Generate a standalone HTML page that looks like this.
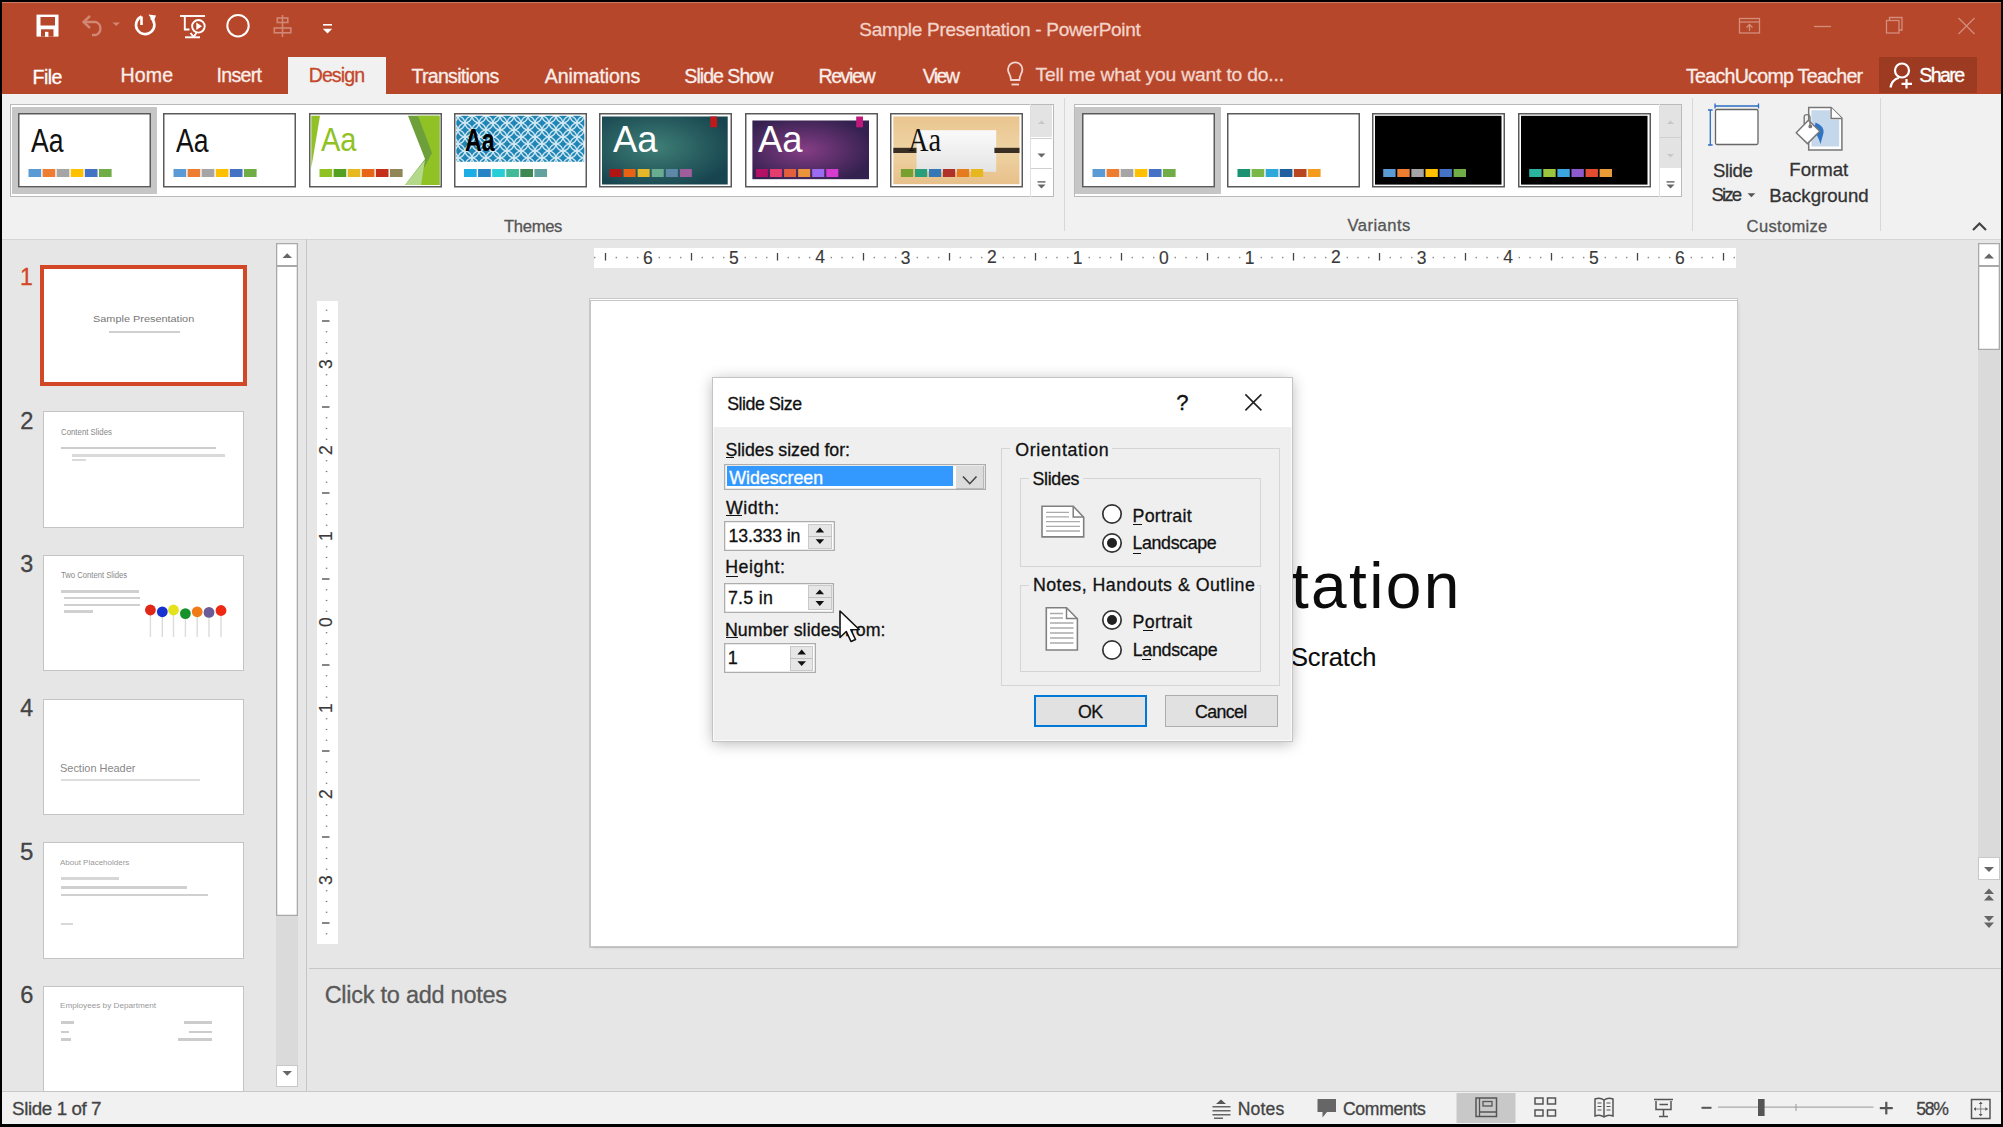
<!DOCTYPE html>
<html><head><meta charset="utf-8"><style>
html,body{margin:0;padding:0;}
body{width:2003px;height:1127px;position:relative;overflow:hidden;background:#000;font-family:'Liberation Sans',sans-serif;}
svg{display:block}
</style></head><body>
<div style="position:absolute;left:0px;top:0px;width:2003px;height:1127px;background:#000;"></div>
<div style="position:absolute;left:2px;top:2px;width:1999px;height:1121.5px;background:#e6e6e6;"></div>
<div style="position:absolute;left:2px;top:2px;width:1999px;height:92px;background:#b7472a;"></div>
<div style="position:absolute;left:2px;top:2px;width:1999px;height:1px;background:#cf7a62;"></div>
<div style="position:absolute;left:2px;top:94px;width:1999px;height:145px;background:#f1f1f1;"></div>
<div style="position:absolute;left:2px;top:239px;width:1999px;height:1px;background:#d5d5d5;"></div>
<div style="position:absolute;left:2px;top:1091px;width:1999px;height:1px;background:#c8c8c8;"></div>
<div style="position:absolute;left:2px;top:1092px;width:1999px;height:31.5px;background:#f1f1f1;"></div>
<div style="position:absolute;left:859.35px;top:20.06px;font-family:'Liberation Sans',sans-serif;font-size:19.04px;letter-spacing:-0.304px;font-weight:400;color:#f3d3c9;line-height:1;white-space:pre;-webkit-text-stroke:0.3px #f3d3c9;">Sample Presentation - PowerPoint</div>
<div style="position:absolute;left:288px;top:57px;width:98px;height:38px;background:#f1f1f1;"></div>
<div style="position:absolute;left:32.53px;top:68.10px;font-family:'Liberation Sans',sans-serif;font-size:19.60px;letter-spacing:-0.535px;font-weight:400;color:#fff;line-height:1;white-space:pre;-webkit-text-stroke:0.3px #fff;">File</div>
<div style="position:absolute;left:120.53px;top:65.60px;font-family:'Liberation Sans',sans-serif;font-size:19.60px;letter-spacing:0.140px;font-weight:400;color:#fbeeea;line-height:1;white-space:pre;-webkit-text-stroke:0.3px #fbeeea;">Home</div>
<div style="position:absolute;left:216.49px;top:65.60px;font-family:'Liberation Sans',sans-serif;font-size:19.60px;letter-spacing:-0.688px;font-weight:400;color:#fbeeea;line-height:1;white-space:pre;-webkit-text-stroke:0.3px #fbeeea;">Insert</div>
<div style="position:absolute;left:308.68px;top:66.14px;font-family:'Liberation Sans',sans-serif;font-size:19.60px;letter-spacing:-0.922px;font-weight:400;color:#c4472a;line-height:1;white-space:pre;-webkit-text-stroke:0.3px #c4472a;">Design</div>
<div style="position:absolute;left:411.46px;top:66.50px;font-family:'Liberation Sans',sans-serif;font-size:19.60px;letter-spacing:-0.728px;font-weight:400;color:#fbeeea;line-height:1;white-space:pre;-webkit-text-stroke:0.3px #fbeeea;">Transitions</div>
<div style="position:absolute;left:544.80px;top:66.50px;font-family:'Liberation Sans',sans-serif;font-size:19.60px;letter-spacing:-0.160px;font-weight:400;color:#fbeeea;line-height:1;white-space:pre;-webkit-text-stroke:0.3px #fbeeea;">Animations</div>
<div style="position:absolute;left:684.37px;top:66.50px;font-family:'Liberation Sans',sans-serif;font-size:19.60px;letter-spacing:-1.002px;font-weight:400;color:#fbeeea;line-height:1;white-space:pre;-webkit-text-stroke:0.3px #fbeeea;">Slide Show</div>
<div style="position:absolute;left:818.43px;top:66.50px;font-family:'Liberation Sans',sans-serif;font-size:19.60px;letter-spacing:-1.424px;font-weight:400;color:#fbeeea;line-height:1;white-space:pre;-webkit-text-stroke:0.3px #fbeeea;">Review</div>
<div style="position:absolute;left:922.65px;top:66.50px;font-family:'Liberation Sans',sans-serif;font-size:19.60px;letter-spacing:-1.581px;font-weight:400;color:#fbeeea;line-height:1;white-space:pre;-webkit-text-stroke:0.3px #fbeeea;">View</div>
<div style="position:absolute;left:1035.51px;top:64.74px;font-family:'Liberation Sans',sans-serif;font-size:19.26px;letter-spacing:-0.175px;font-weight:400;color:#f2d6cf;line-height:1;white-space:pre;-webkit-text-stroke:0.3px #f2d6cf;">Tell me what you want to do...</div>
<div style="position:absolute;left:1685.91px;top:66.54px;font-family:'Liberation Sans',sans-serif;font-size:19.60px;letter-spacing:-0.703px;font-weight:400;color:#fbeeea;line-height:1;white-space:pre;-webkit-text-stroke:0.3px #fbeeea;">TeachUcomp Teacher</div>
<div style="position:absolute;left:1879px;top:57px;width:98px;height:36px;background:#9c3b22;"></div>
<div style="position:absolute;left:1919.32px;top:66.10px;font-family:'Liberation Sans',sans-serif;font-size:19.60px;letter-spacing:-1.642px;font-weight:400;color:#fff;line-height:1;white-space:pre;-webkit-text-stroke:0.3px #fff;">Share</div>
<div style="position:absolute;left:503.97px;top:218.67px;font-family:'Liberation Sans',sans-serif;font-size:16.60px;letter-spacing:-0.299px;font-weight:400;color:#555;line-height:1;white-space:pre;-webkit-text-stroke:0.3px #555;">Themes</div>
<div style="position:absolute;left:1347.48px;top:218.27px;font-family:'Liberation Sans',sans-serif;font-size:16.60px;letter-spacing:0.467px;font-weight:400;color:#555;line-height:1;white-space:pre;-webkit-text-stroke:0.3px #555;">Variants</div>
<div style="position:absolute;left:1746.62px;top:218.87px;font-family:'Liberation Sans',sans-serif;font-size:16.60px;letter-spacing:0.293px;font-weight:400;color:#555;line-height:1;white-space:pre;-webkit-text-stroke:0.3px #555;">Customize</div>
<div style="position:absolute;left:1713.02px;top:161.59px;font-family:'Liberation Sans',sans-serif;font-size:18.60px;letter-spacing:-0.405px;font-weight:400;color:#333;line-height:1;white-space:pre;-webkit-text-stroke:0.3px #333;">Slide</div>
<div style="position:absolute;left:1711.42px;top:186.39px;font-family:'Liberation Sans',sans-serif;font-size:18.60px;letter-spacing:-1.803px;font-weight:400;color:#333;line-height:1;white-space:pre;-webkit-text-stroke:0.3px #333;">Size</div>
<div style="position:absolute;left:1789.36px;top:161.21px;font-family:'Liberation Sans',sans-serif;font-size:18.60px;letter-spacing:-0.018px;font-weight:400;color:#333;line-height:1;white-space:pre;-webkit-text-stroke:0.3px #333;">Format</div>
<div style="position:absolute;left:1769.31px;top:186.53px;font-family:'Liberation Sans',sans-serif;font-size:18.60px;letter-spacing:0.007px;font-weight:400;color:#333;line-height:1;white-space:pre;-webkit-text-stroke:0.3px #333;">Background</div>
<div style="position:absolute;left:1064px;top:98px;width:1px;height:133px;background:#d8d8d8;"></div>
<div style="position:absolute;left:1692px;top:98px;width:1px;height:133px;background:#d8d8d8;"></div>
<div style="position:absolute;left:1880px;top:98px;width:1px;height:133px;background:#d8d8d8;"></div>
<div style="position:absolute;left:306px;top:239px;width:1px;height:852px;background:#c6c6c6;"></div>
<div style="position:absolute;left:309px;top:968px;width:1692px;height:1px;background:#c6c6c6;"></div>
<div style="position:absolute;left:324.67px;top:984.48px;font-family:'Liberation Sans',sans-serif;font-size:23.51px;letter-spacing:-0.260px;font-weight:400;color:#595959;line-height:1;white-space:pre;-webkit-text-stroke:0.3px #595959;">Click to add notes</div>
<div style="position:absolute;left:12.11px;top:1100.30px;font-family:'Liberation Sans',sans-serif;font-size:18.78px;letter-spacing:-0.404px;font-weight:400;color:#444;line-height:1;white-space:pre;-webkit-text-stroke:0.3px #444;">Slide 1 of 7</div>
<div style="position:absolute;left:1237.64px;top:1100.52px;font-family:'Liberation Sans',sans-serif;font-size:17.60px;letter-spacing:0.150px;font-weight:400;color:#444;line-height:1;white-space:pre;-webkit-text-stroke:0.3px #444;">Notes</div>
<div style="position:absolute;left:1342.97px;top:1100.61px;font-family:'Liberation Sans',sans-serif;font-size:17.60px;letter-spacing:-0.314px;font-weight:400;color:#444;line-height:1;white-space:pre;-webkit-text-stroke:0.3px #444;">Comments</div>
<div style="position:absolute;left:1916.15px;top:1100.61px;font-family:'Liberation Sans',sans-serif;font-size:17.60px;letter-spacing:-1.284px;font-weight:400;color:#444;line-height:1;white-space:pre;-webkit-text-stroke:0.3px #444;">58%</div>
<div style="position:absolute;left:590px;top:299px;width:1147px;height:648px;background:#fff;box-shadow:0 0 0 1px #c8c8c8;"></div>
<svg style="position:absolute;left:30px;top:8px;" width="320" height="36" viewBox="0 0 320 36">
<g transform="translate(-30,-8)">
 <rect x="36.5" y="14.6" width="22" height="22" fill="#ffffff"/>
 <rect x="40.5" y="17" width="14.5" height="8.5" fill="#b7472a"/>
 <rect x="41" y="29.3" width="12.5" height="7.3" fill="#b7472a"/>
 <rect x="45" y="31.8" width="3.4" height="5" fill="#ffffff"/>
 <g opacity="0.35" fill="none" stroke="#ffffff" stroke-width="2.4">
  <path d="M84 22 H96 A7 7 0 0 1 96 35 H92"/>
  <path d="M90 16 L83.5 22 L90 28"/>
 </g>
 <path d="M112.5 22.5 L120 22.5 L116.2 26 Z" fill="#ffffff" opacity="0.35"/>
 <g fill="none" stroke="#ffffff" stroke-width="2.6">
  <path d="M151 17.8 A9.2 9.2 0 1 1 141.5 16.5"/>
  <path d="M141.5 16.5 V25"/>
 </g>
 <path d="M148.5 14.5 L156 15.5 L153.5 22 Z" fill="#ffffff"/>
 <g fill="none" stroke="#ffffff" stroke-width="1.9">
  <path d="M180 16 H205"/>
  <path d="M184.8 16 V29.5 H189.5"/>
  <circle cx="198.4" cy="26.3" r="6.3"/>
  <path d="M185 37.3 H200"/>
  <path d="M190.5 33 L193.5 36.8 M196.5 33 L193.5 36.8"/>
 </g>
 <path d="M196.3 22.6 L202 26.3 L196.3 30 Z" fill="#ffffff"/>
 <circle cx="238" cy="25.7" r="10.7" fill="none" stroke="#ffffff" stroke-width="2"/>
 <g fill="none" stroke="#ffffff" stroke-width="1.6" opacity="0.35">
  <path d="M282.5 15 V37"/>
  <rect x="277.3" y="18" width="10.5" height="4.5"/>
  <rect x="274.3" y="28" width="16.5" height="4.8"/>
 </g>
 <rect x="323" y="24" width="9" height="1.6" fill="#ffffff"/>
 <path d="M322.8 28.8 L332.2 28.8 L327.5 33.6 Z" fill="#ffffff"/>
</g></svg>
<svg style="position:absolute;left:1730px;top:10px;" width="260" height="30" viewBox="0 0 260 30">
<g transform="translate(-1730,-10)" fill="none" stroke="#ffffff" stroke-width="1.3" opacity="0.38">
 <rect x="1739.5" y="18.5" width="20" height="14.5"/>
 <path d="M1739.5 22 H1759.5"/>
 <path d="M1749.5 31 V25 M1746.5 27.5 L1749.5 24.5 L1752.5 27.5"/>
 <path d="M1814 26.5 H1831"/>
 <rect x="1886.5" y="20.5" width="12.5" height="12.5"/>
 <path d="M1889.5 20.5 V17.5 H1902 V30 H1899"/>
 <path d="M1958.5 18 L1974.5 34 M1974.5 18 L1958.5 34"/>
</g></svg>
<svg style="position:absolute;left:1885px;top:60px;" width="32" height="32" viewBox="0 0 32 32">
<g transform="translate(-1885,-60)" fill="none" stroke="#ffffff" stroke-width="2.2">
 <circle cx="1902" cy="70.5" r="7"/>
 <path d="M1890.5 87.5 A12 12 0 0 1 1899 77.8"/>
 <path d="M1906.5 79 V88.5 M1901.5 83.8 H1912"/>
</g></svg>
<svg style="position:absolute;left:1004px;top:60px;" width="24" height="30" viewBox="0 0 24 30">
<g transform="translate(-1004,-60)" fill="none" stroke="#f2d6cf" stroke-width="1.8">
 <path d="M1011 80 C1011 75 1008 73 1008 69.5 A7.2 7.2 0 0 1 1022.4 69.5 C1022.4 73 1019.4 75 1019.4 80 Z"/>
 <path d="M1011.5 84.5 H1019"/>
</g></svg>
<div style="position:absolute;left:11px;top:105.3px;width:1042px;height:91px;background:#fff;box-shadow:0 0 0 1px #bababa;"></div>
<div style="position:absolute;left:11.5px;top:106.5px;width:145px;height:87px;background:#c6c6c6;"></div>
<div style="position:absolute;left:1075px;top:105.3px;width:606px;height:91px;background:#fff;box-shadow:0 0 0 1px #bababa;"></div>
<div style="position:absolute;left:1075px;top:106.5px;width:145.5px;height:87px;background:#c6c6c6;"></div>
<svg style="position:absolute;left:16.7px;top:112.2px;" width="135" height="76.5" viewBox="0 0 135 76.5"><g transform="translate(1,1)"><rect width="133" height="74.5" fill="#fff"/><rect x="10.50" y="56" width="12.7" height="8" fill="#5b9bd5"/><rect x="24.58" y="56" width="12.7" height="8" fill="#ed7d31"/><rect x="38.66" y="56" width="12.7" height="8" fill="#a5a5a5"/><rect x="52.74" y="56" width="12.7" height="8" fill="#ffc000"/><rect x="66.82" y="56" width="12.7" height="8" fill="#4472c4"/><rect x="80.90" y="56" width="12.7" height="8" fill="#70ad47"/><rect x="0.75" y="0.75" width="131.5" height="73.0" fill="none" stroke="#5a5a5a" stroke-width="1.5"/></g></svg>
<svg style="position:absolute;left:162px;top:112.2px;" width="135" height="76.5" viewBox="0 0 135 76.5"><g transform="translate(1,1)"><rect width="133" height="74.5" fill="#fff"/><rect x="10.50" y="56" width="12.7" height="8" fill="#5b9bd5"/><rect x="24.58" y="56" width="12.7" height="8" fill="#ed7d31"/><rect x="38.66" y="56" width="12.7" height="8" fill="#a5a5a5"/><rect x="52.74" y="56" width="12.7" height="8" fill="#ffc000"/><rect x="66.82" y="56" width="12.7" height="8" fill="#4472c4"/><rect x="80.90" y="56" width="12.7" height="8" fill="#70ad47"/><rect x="0.75" y="0.75" width="131.5" height="73.0" fill="none" stroke="#5a5a5a" stroke-width="1.5"/></g></svg>
<div style="position:absolute;left:30.85px;top:124.32px;font-family:'Liberation Sans',sans-serif;font-size:33.29px;letter-spacing:0.000px;font-weight:400;color:#111;line-height:1;white-space:pre;z-index:2;transform:scaleX(0.7983);transform-origin:0 0;">Aa</div>
<div style="position:absolute;left:175.65px;top:124.32px;font-family:'Liberation Sans',sans-serif;font-size:33.29px;letter-spacing:0.000px;font-weight:400;color:#111;line-height:1;white-space:pre;z-index:2;transform:scaleX(0.7983);transform-origin:0 0;">Aa</div>
<svg style="position:absolute;left:307.7px;top:112.2px;" width="135" height="76.5" viewBox="0 0 135 76.5"><g transform="translate(1,1)"><rect width="133" height="74.5" fill="#fff"/>
<path d="M2.3 2.8 H11 L2.3 55 Z" fill="#90c226"/>
<path d="M99 2.8 H130.5 V72 H96 L116 46 Z" fill="#6d9f3a"/>
<path d="M109 2.8 H130.5 V72 H106 L123 40 Z" fill="#90c226"/>
<path d="M96 72 L116 47 L112 72 Z" fill="#b5d98a"/>
<rect x="10.50" y="56" width="12.7" height="8" fill="#90c226"/><rect x="24.58" y="56" width="12.7" height="8" fill="#54a021"/><rect x="38.66" y="56" width="12.7" height="8" fill="#e6b91e"/><rect x="52.74" y="56" width="12.7" height="8" fill="#e76618"/><rect x="66.82" y="56" width="12.7" height="8" fill="#c42f1a"/><rect x="80.90" y="56" width="12.7" height="8" fill="#918655"/><rect x="0.75" y="0.75" width="131.5" height="73.0" fill="none" stroke="#5a5a5a" stroke-width="1.5"/></g></svg>
<div style="position:absolute;left:320.85px;top:122.09px;font-family:'Liberation Sans',sans-serif;font-size:34.14px;letter-spacing:0.000px;font-weight:400;color:#90c226;line-height:1;white-space:pre;z-index:2;transform:scaleX(0.8503);transform-origin:0 0;">Aa</div>
<svg style="position:absolute;left:453.3px;top:112.2px;" width="135" height="76.5" viewBox="0 0 135 76.5"><g transform="translate(1,1)"><defs><pattern id="pt" width="14" height="14" patternUnits="userSpaceOnUse" x="4" y="3">
<rect width="14" height="14" fill="#1d86b6"/>
<circle cx="0" cy="7" r="6.8" fill="none" stroke="#cfe6f1" stroke-width="1.3"/>
<circle cx="14" cy="7" r="6.8" fill="none" stroke="#cfe6f1" stroke-width="1.3"/>
<circle cx="7" cy="0" r="6.8" fill="none" stroke="#cfe6f1" stroke-width="1.3"/>
<circle cx="7" cy="14" r="6.8" fill="none" stroke="#cfe6f1" stroke-width="1.3"/>
</pattern></defs>
<rect width="133" height="74.5" fill="#fff"/>
<rect x="2.3" y="2.8" width="128" height="46" fill="url(#pt)"/>
<rect x="10.00" y="56" width="12.7" height="8" fill="#1cade4"/><rect x="24.08" y="56" width="12.7" height="8" fill="#2683c6"/><rect x="38.16" y="56" width="12.7" height="8" fill="#27ced7"/><rect x="52.24" y="56" width="12.7" height="8" fill="#42ba97"/><rect x="66.32" y="56" width="12.7" height="8" fill="#3e8853"/><rect x="80.40" y="56" width="12.7" height="8" fill="#62a39f"/><rect x="0.75" y="0.75" width="131.5" height="73.0" fill="none" stroke="#5a5a5a" stroke-width="1.5"/></g></svg>
<div style="position:absolute;left:464.71px;top:125.07px;font-family:'Liberation Sans',sans-serif;font-size:31.55px;letter-spacing:0.000px;font-weight:700;color:#000;line-height:1;white-space:pre;z-index:2;transform:scaleX(0.7349);transform-origin:0 0;">Aa</div>
<svg style="position:absolute;left:598.3px;top:112.2px;" width="135" height="76.5" viewBox="0 0 135 76.5"><g transform="translate(1,1)"><defs><radialGradient id="ion" cx="0.42" cy="0.45" r="0.65"><stop offset="0" stop-color="#3f7f76"/><stop offset="1" stop-color="#17444f"/></radialGradient></defs>
<rect width="133" height="74.5" fill="#fff"/>
<rect x="3" y="3.5" width="125.7" height="68" fill="url(#ion)"/>
<rect x="111.3" y="3.5" width="6.7" height="10.8" fill="#c0191b"/>
<rect x="10.50" y="56" width="12" height="8" fill="#b01513"/><rect x="24.58" y="56" width="12" height="8" fill="#ea6312"/><rect x="38.66" y="56" width="12" height="8" fill="#e6b729"/><rect x="52.74" y="56" width="12" height="8" fill="#6aac90"/><rect x="66.82" y="56" width="12" height="8" fill="#5f87a8"/><rect x="80.90" y="56" width="12" height="8" fill="#9e5e9b"/><rect x="0.75" y="0.75" width="131.5" height="73.0" fill="none" stroke="#5a5a5a" stroke-width="1.5"/></g></svg>
<div style="position:absolute;left:613.10px;top:122.49px;font-family:'Liberation Sans',sans-serif;font-size:36.29px;letter-spacing:0.000px;font-weight:400;color:#fff;line-height:1;white-space:pre;z-index:2;transform:scaleX(1.0032);transform-origin:0 0;">Aa</div>
<svg style="position:absolute;left:743.6px;top:112.2px;" width="135" height="76.5" viewBox="0 0 135 76.5"><g transform="translate(1,1)"><defs><radialGradient id="ionb" cx="0.45" cy="0.5" r="0.6"><stop offset="0" stop-color="#853d85"/><stop offset="1" stop-color="#33214f"/></radialGradient></defs>
<rect width="133" height="74.5" fill="#fff"/>
<rect x="7.4" y="7.5" width="116.6" height="58.7" fill="url(#ionb)"/>
<rect x="111.2" y="3.5" width="6.8" height="10.8" fill="#c0187a"/>
<rect x="10.90" y="56" width="12" height="8" fill="#b31166"/><rect x="24.98" y="56" width="12" height="8" fill="#e33d6f"/><rect x="39.06" y="56" width="12" height="8" fill="#e45f3c"/><rect x="53.14" y="56" width="12" height="8" fill="#e9943a"/><rect x="67.22" y="56" width="12" height="8" fill="#9b6bf2"/><rect x="81.30" y="56" width="12" height="8" fill="#d53dd0"/><rect x="0.75" y="0.75" width="131.5" height="73.0" fill="none" stroke="#5a5a5a" stroke-width="1.5"/></g></svg>
<div style="position:absolute;left:757.65px;top:122.49px;font-family:'Liberation Sans',sans-serif;font-size:36.29px;letter-spacing:0.000px;font-weight:400;color:#fff;line-height:1;white-space:pre;z-index:2;transform:scaleX(1.0033);transform-origin:0 0;">Aa</div>
<svg style="position:absolute;left:888.5px;top:112.2px;" width="135" height="76.5" viewBox="0 0 135 76.5"><g transform="translate(1,1)"><defs><linearGradient id="wd" x1="0" y1="0" x2="0" y2="1"><stop offset="0" stop-color="#e9c58f"/><stop offset="0.5" stop-color="#efd3a4"/><stop offset="1" stop-color="#e7c08a"/></linearGradient>
<linearGradient id="pp" x1="0" y1="0" x2="0" y2="1"><stop offset="0" stop-color="#fafafa"/><stop offset="1" stop-color="#e4e4e4"/></linearGradient></defs>
<rect width="133" height="74.5" fill="#fff"/>
<rect x="3.3" y="3.4" width="126.2" height="67.8" fill="url(#wd)"/>
<rect x="26.5" y="17.2" width="79.7" height="41.6" fill="url(#pp)"/>
<rect x="3.3" y="34.8" width="23.2" height="5.2" fill="#3a2e22"/>
<rect x="104.4" y="34.8" width="25.1" height="5.2" fill="#3a2e22"/>
<rect x="10.90" y="56" width="12.3" height="8" fill="#77a02e"/><rect x="24.90" y="56" width="12.3" height="8" fill="#2a9e7a"/><rect x="38.90" y="56" width="12.3" height="8" fill="#3677b5"/><rect x="52.90" y="56" width="12.3" height="8" fill="#b0302a"/><rect x="66.90" y="56" width="12.3" height="8" fill="#e67a1e"/><rect x="80.90" y="56" width="12.3" height="8" fill="#e6b71e"/><rect x="0.75" y="0.75" width="131.5" height="73.0" fill="none" stroke="#5a5a5a" stroke-width="1.5"/></g></svg>
<div style="position:absolute;left:907.81px;top:121.99px;font-family:'Liberation Serif',sans-serif;font-size:34.48px;letter-spacing:0.000px;font-weight:400;color:#111;line-height:1;white-space:pre;z-index:2;transform:scaleX(0.8246);transform-origin:0 0;">Aa</div>
<div style="position:absolute;left:1031px;top:104.5px;width:21px;height:32px;background:#e3e3e3;"></div>
<div style="position:absolute;left:1031px;top:137.5px;width:21px;height:1px;background:#d0d0d0;"></div>
<div style="position:absolute;left:1031px;top:167.5px;width:21px;height:1px;background:#d0d0d0;"></div>
<div style="position:absolute;left:1030px;top:104px;width:1px;height:93px;background:#e0e0e0;"></div>
<svg style="position:absolute;left:1031px;top:104px;" width="21" height="93" viewBox="0 0 21 93">
<path d="M7 20 L14 20 L10.5 16.5 Z" fill="#c8c8c8"/>
<path d="M6.5 49.5 L14.5 49.5 L10.5 53.5 Z" fill="#666"/>
<rect x="6.5" y="77.2" width="8" height="1.4" fill="#666"/>
<path d="M6.5 80.5 L14.5 80.5 L10.5 84.5 Z" fill="#666"/>
</svg>
<svg style="position:absolute;left:1081px;top:112.2px;" width="135" height="76.5" viewBox="0 0 135 76.5"><g transform="translate(1,1)"><rect width="133" height="74.5" fill="#fff"/><rect x="10.50" y="56" width="12.7" height="8" fill="#5b9bd5"/><rect x="24.58" y="56" width="12.7" height="8" fill="#ed7d31"/><rect x="38.66" y="56" width="12.7" height="8" fill="#a5a5a5"/><rect x="52.74" y="56" width="12.7" height="8" fill="#ffc000"/><rect x="66.82" y="56" width="12.7" height="8" fill="#4472c4"/><rect x="80.90" y="56" width="12.7" height="8" fill="#70ad47"/><rect x="0.75" y="0.75" width="131.5" height="73.0" fill="none" stroke="#5a5a5a" stroke-width="1.5"/></g></svg>
<svg style="position:absolute;left:1226.3px;top:112.2px;" width="135" height="76.5" viewBox="0 0 135 76.5"><g transform="translate(1,1)"><rect width="133" height="74.5" fill="#fff"/><rect x="10.50" y="56" width="12.7" height="8" fill="#1a9271"/><rect x="24.58" y="56" width="12.7" height="8" fill="#7ab648"/><rect x="38.66" y="56" width="12.7" height="8" fill="#2ea8d8"/><rect x="52.74" y="56" width="12.7" height="8" fill="#1f5f9f"/><rect x="66.82" y="56" width="12.7" height="8" fill="#b8461e"/><rect x="80.90" y="56" width="12.7" height="8" fill="#f39c1d"/><rect x="0.75" y="0.75" width="131.5" height="73.0" fill="none" stroke="#5a5a5a" stroke-width="1.5"/></g></svg>
<svg style="position:absolute;left:1371.4px;top:112.2px;" width="135" height="76.5" viewBox="0 0 135 76.5"><g transform="translate(1,1)"><rect width="133" height="74.5" fill="#fff"/><rect x="3" y="2.8" width="126.5" height="68.8" fill="#000"/><rect x="11.20" y="56" width="12.4" height="8" fill="#5b9bd5"/><rect x="25.28" y="56" width="12.4" height="8" fill="#ed7d31"/><rect x="39.36" y="56" width="12.4" height="8" fill="#a5a5a5"/><rect x="53.44" y="56" width="12.4" height="8" fill="#ffc000"/><rect x="67.52" y="56" width="12.4" height="8" fill="#4472c4"/><rect x="81.60" y="56" width="12.4" height="8" fill="#70ad47"/><rect x="0.75" y="0.75" width="131.5" height="73.0" fill="none" stroke="#5a5a5a" stroke-width="1.5"/></g></svg>
<svg style="position:absolute;left:1517.2px;top:112.2px;" width="135" height="76.5" viewBox="0 0 135 76.5"><g transform="translate(1,1)"><rect width="133" height="74.5" fill="#fff"/><rect x="3" y="2.8" width="126.5" height="68.8" fill="#000"/><rect x="11.20" y="56" width="12.4" height="8" fill="#2bb5a0"/><rect x="25.28" y="56" width="12.4" height="8" fill="#9bc53d"/><rect x="39.36" y="56" width="12.4" height="8" fill="#3aa6dd"/><rect x="53.44" y="56" width="12.4" height="8" fill="#8e5ad0"/><rect x="67.52" y="56" width="12.4" height="8" fill="#e24c32"/><rect x="81.60" y="56" width="12.4" height="8" fill="#e89b36"/><rect x="0.75" y="0.75" width="131.5" height="73.0" fill="none" stroke="#5a5a5a" stroke-width="1.5"/></g></svg>
<div style="position:absolute;left:1659.5px;top:104.5px;width:21px;height:32px;background:#e3e3e3;"></div>
<div style="position:absolute;left:1659.5px;top:137.5px;width:21px;height:30px;background:#e3e3e3;"></div>
<div style="position:absolute;left:1659.5px;top:137px;width:21px;height:1px;background:#d0d0d0;"></div>
<div style="position:absolute;left:1658.5px;top:104px;width:1px;height:93px;background:#e0e0e0;"></div>
<svg style="position:absolute;left:1659.5px;top:104px;" width="21" height="93" viewBox="0 0 21 93">
<path d="M7 20 L14 20 L10.5 16.5 Z" fill="#c8c8c8"/>
<path d="M7 50 L14 50 L10.5 53.5 Z" fill="#c8c8c8"/>
<rect x="6.5" y="77.2" width="8" height="1.4" fill="#666"/>
<path d="M6.5 80.5 L14.5 80.5 L10.5 84.5 Z" fill="#666"/>
</svg>
<svg style="position:absolute;left:1705px;top:100px;" width="175" height="55" viewBox="0 0 175 55">
<g transform="translate(-1705,-100)">
 <rect x="1715.5" y="109.5" width="42.5" height="35" rx="1.5" fill="#fff" stroke="#666" stroke-width="1.3"/>
 <path d="M1715 106 H1758.5 M1715 103.5 V108.5 M1758.5 103.5 V108.5" stroke="#2b6cc4" stroke-width="1.3" fill="none"/>
 <path d="M1710.3 110 V145 M1708 110 H1712.6 M1708 145 H1712.6" stroke="#2b6cc4" stroke-width="1.3" fill="none"/>
 <path d="M1808.7 107.6 H1831.1 L1841.9 118 V150 H1808.7 Z" fill="#fff" stroke="#777" stroke-width="1.5"/>
 <path d="M1811.4 110.3 H1830 V119.5 H1839.2 V146.6 H1811.4 Z" fill="#c5d7ea"/>
 <path d="M1831.1 107.6 V118.5 H1841.9" fill="#fff" stroke="#777" stroke-width="1.5"/>
 <path d="M1815.5 122.5 Q1824.5 126 1823.5 133 L1820.5 144 Q1818 136 1814 131 Z" fill="#2e75c6"/>
 <path d="M1796.2 132.7 L1808.4 120.2 L1819.8 131.2 L1807.5 143.6 Z" fill="#fff" stroke="#777" stroke-width="1.5" stroke-linejoin="round"/>
 <path d="M1804.2 124 V116.5 Q1804.5 114.6 1807 114.6 Q1809.6 114.6 1810 117 V126" fill="none" stroke="#777" stroke-width="1.4"/>
 <circle cx="1810.3" cy="126.4" r="1.9" fill="#777"/>
</g></svg>
<svg style="position:absolute;left:1745px;top:190px;" width="14" height="10" viewBox="0 0 14 10"><path d="M2.5 3.2 H10.3 L6.4 7.2 Z" fill="#555"/></svg>
<svg style="position:absolute;left:1968px;top:218px;" width="24" height="16" viewBox="0 0 24 16"><path d="M5 12 L11.5 5.5 L18 12" fill="none" stroke="#444" stroke-width="2.2"/></svg>
<div style="position:absolute;left:39.7px;top:264.7px;width:207.7px;height:121.6px;background:#d24726;"></div>
<div style="position:absolute;left:44.3px;top:269.3px;width:198.6px;height:112.4px;background:#fff;"></div>
<div style="position:absolute;left:19.90px;top:265.86px;font-family:'Liberation Sans',sans-serif;font-size:23.04px;letter-spacing:-2.409px;font-weight:400;color:#d24726;line-height:1;white-space:pre;-webkit-text-stroke:0.3px #d24726;">1</div>
<div style="position:absolute;left:93.26px;top:316.27px;font-family:'Liberation Sans',sans-serif;font-size:8.19px;letter-spacing:0.000px;font-weight:400;color:#777;line-height:1;white-space:pre;transform:scaleX(1.3340);transform-origin:0 0;">Sample Presentation</div>
<div style="position:absolute;left:108.6px;top:330.5px;width:71.8px;height:2.5px;background:#cfcfcf;"></div>
<div style="position:absolute;left:43.6px;top:411.5px;width:199.6px;height:115.0px;background:#fff;box-shadow:0 0 0 1px #c4c4c4;"></div>
<div style="position:absolute;left:20.26px;top:410.04px;font-family:'Liberation Sans',sans-serif;font-size:23.71px;letter-spacing:-0.209px;font-weight:400;color:#444;line-height:1;white-space:pre;-webkit-text-stroke:0.3px #444;">2</div>
<div style="position:absolute;left:60.71px;top:428.26px;font-family:'Liberation Sans',sans-serif;font-size:8.65px;letter-spacing:0.000px;font-weight:400;color:#888;line-height:1;white-space:pre;transform:scaleX(0.9078);transform-origin:0 0;">Content Slides</div>
<div style="position:absolute;left:61px;top:446.5px;width:155px;height:2.8px;background:#cdcdcd;"></div>
<div style="position:absolute;left:72.4px;top:454.2px;width:152.9px;height:2.4px;background:#dadada;"></div>
<div style="position:absolute;left:72.4px;top:459.3px;width:13.6px;height:2.2px;background:#dadada;"></div>
<div style="position:absolute;left:43.6px;top:555.8px;width:199.6px;height:114.0px;background:#fff;box-shadow:0 0 0 1px #c4c4c4;"></div>
<div style="position:absolute;left:20.37px;top:553.29px;font-family:'Liberation Sans',sans-serif;font-size:23.38px;letter-spacing:-0.989px;font-weight:400;color:#444;line-height:1;white-space:pre;-webkit-text-stroke:0.3px #444;">3</div>
<div style="position:absolute;left:60.65px;top:571.33px;font-family:'Liberation Sans',sans-serif;font-size:8.51px;letter-spacing:0.000px;font-weight:400;color:#888;line-height:1;white-space:pre;transform:scaleX(0.9030);transform-origin:0 0;">Two Content Slides</div>
<div style="position:absolute;left:61px;top:590px;width:78px;height:2.5px;background:#d0d0d0;"></div>
<div style="position:absolute;left:64px;top:596.5px;width:75.8px;height:2.5px;background:#d0d0d0;"></div>
<div style="position:absolute;left:64px;top:603.5px;width:75.8px;height:2.5px;background:#d0d0d0;"></div>
<div style="position:absolute;left:64px;top:610.2px;width:29px;height:2.5px;background:#d0d0d0;"></div>
<svg style="position:absolute;left:140px;top:600px;" width="90" height="45" viewBox="0 0 90 45"><rect x="9.7" y="15.0" width="1.4" height="22.0" fill="#dcdcdc"/><rect x="21.6" y="16.8" width="1.4" height="20.2" fill="#dcdcdc"/><rect x="32.8" y="15.0" width="1.4" height="22.0" fill="#dcdcdc"/><rect x="44.7" y="18.6" width="1.4" height="18.4" fill="#dcdcdc"/><rect x="56.5" y="16.8" width="1.4" height="20.2" fill="#dcdcdc"/><rect x="68.3" y="17.4" width="1.4" height="19.6" fill="#dcdcdc"/><rect x="80.3" y="15.5" width="1.4" height="21.5" fill="#dcdcdc"/><circle cx="10.4" cy="10.0" r="5.4" fill="#e0281a"/><circle cx="22.3" cy="11.8" r="5.4" fill="#1832d0"/><circle cx="33.5" cy="10.0" r="5.4" fill="#e4e21c"/><circle cx="45.4" cy="13.6" r="5.4" fill="#15922a"/><circle cx="57.2" cy="11.8" r="5.4" fill="#f07a18"/><circle cx="69.0" cy="12.4" r="5.4" fill="#6a5a98"/><circle cx="81.0" cy="10.5" r="5.4" fill="#ef2a14"/></svg>
<div style="position:absolute;left:43.6px;top:699.5px;width:199.6px;height:114.70000000000005px;background:#fff;box-shadow:0 0 0 1px #c4c4c4;"></div>
<div style="position:absolute;left:20.34px;top:697.13px;font-family:'Liberation Sans',sans-serif;font-size:23.14px;letter-spacing:-0.503px;font-weight:400;color:#444;line-height:1;white-space:pre;-webkit-text-stroke:0.3px #444;">4</div>
<div style="position:absolute;left:60.21px;top:764.43px;font-family:'Liberation Sans',sans-serif;font-size:10.14px;letter-spacing:0.000px;font-weight:400;color:#888;line-height:1;white-space:pre;transform:scaleX(1.0808);transform-origin:0 0;">Section Header</div>
<div style="position:absolute;left:60.5px;top:778.8px;width:139.2px;height:2.4px;background:#dedede;"></div>
<div style="position:absolute;left:43.6px;top:843.1px;width:199.6px;height:114.89999999999998px;background:#fff;box-shadow:0 0 0 1px #c4c4c4;"></div>
<div style="position:absolute;left:20.04px;top:840.19px;font-family:'Liberation Sans',sans-serif;font-size:24.14px;letter-spacing:-1.589px;font-weight:400;color:#444;line-height:1;white-space:pre;-webkit-text-stroke:0.3px #444;">5</div>
<div style="position:absolute;left:60.15px;top:858.53px;font-family:'Liberation Sans',sans-serif;font-size:7.70px;letter-spacing:0.000px;font-weight:400;color:#999;line-height:1;white-space:pre;transform:scaleX(1.0399);transform-origin:0 0;">About Placeholders</div>
<div style="position:absolute;left:60.5px;top:877.3px;width:58px;height:2.6px;background:#d6d6d6;"></div>
<div style="position:absolute;left:60.5px;top:886.3px;width:126px;height:2.6px;background:#d0d0d0;"></div>
<div style="position:absolute;left:60.5px;top:893.8px;width:147.3px;height:2.6px;background:#d0d0d0;"></div>
<div style="position:absolute;left:60.5px;top:923px;width:12.5px;height:2.2px;background:#d8d8d8;"></div>
<div style="position:absolute;left:43.6px;top:986.9px;width:199.6px;height:104.10000000000002px;background:#fff;box-shadow:0 0 0 1px #c4c4c4;"></div>
<div style="position:absolute;left:20.27px;top:983.75px;font-family:'Liberation Sans',sans-serif;font-size:23.66px;letter-spacing:0.315px;font-weight:400;color:#444;line-height:1;white-space:pre;-webkit-text-stroke:0.3px #444;">6</div>
<div style="position:absolute;left:59.90px;top:1003.48px;font-family:'Liberation Sans',sans-serif;font-size:6.81px;letter-spacing:0.000px;font-weight:400;color:#999;line-height:1;white-space:pre;transform:scaleX(1.2002);transform-origin:0 0;">Employees by Department</div>
<div style="position:absolute;left:60.5px;top:1021px;width:13.099999999999994px;height:2.6px;background:#cccccc;"></div>
<div style="position:absolute;left:184px;top:1021px;width:28.19999999999999px;height:2.6px;background:#cccccc;"></div>
<div style="position:absolute;left:60.5px;top:1030.5px;width:8.099999999999994px;height:2.6px;background:#cccccc;"></div>
<div style="position:absolute;left:189px;top:1030.5px;width:23.19999999999999px;height:2.6px;background:#cccccc;"></div>
<div style="position:absolute;left:60.5px;top:1038px;width:10.700000000000003px;height:2.6px;background:#cccccc;"></div>
<div style="position:absolute;left:178px;top:1038px;width:34.19999999999999px;height:2.6px;background:#cccccc;"></div>
<div style="position:absolute;left:276px;top:243px;width:22.4px;height:844px;background:#dadada;"></div>
<div style="position:absolute;left:276px;top:243px;width:22.4px;height:673px;background:#fff;box-shadow:inset 0 0 0 1.3px #a9a9a9;"></div>
<div style="position:absolute;left:276px;top:265px;width:22.4px;height:1.5px;background:#a9a9a9;"></div>
<div style="position:absolute;left:276px;top:1064.5px;width:22.4px;height:22.5px;background:#fff;box-shadow:inset 0 0 0 1px #c8c8c8;"></div>
<svg style="position:absolute;left:276px;top:243px;" width="23" height="844" viewBox="0 0 23 844">
<path d="M6.5 15 L16 15 L11.2 10.3 Z" fill="#666"/>
<path d="M6.5 828 L16 828 L11.2 832.8 Z" fill="#666"/>
</svg>
<div style="position:absolute;left:593.5px;top:248px;width:1142.2px;height:19.5px;background:#fff;"></div>
<svg style="position:absolute;left:593.5px;top:248px;" width="1143" height="20" viewBox="0 0 1143 20"><rect x="0.15" y="8.8" width="1.2" height="1.5" fill="#777"/><rect x="10.85" y="5" width="1.3" height="7.5" fill="#444"/><rect x="21.65" y="8.8" width="1.2" height="1.5" fill="#777"/><rect x="32.40" y="8.8" width="1.2" height="1.5" fill="#777"/><rect x="43.15" y="8.8" width="1.2" height="1.5" fill="#777"/><rect x="64.65" y="8.8" width="1.2" height="1.5" fill="#777"/><rect x="75.40" y="8.8" width="1.2" height="1.5" fill="#777"/><rect x="86.15" y="8.8" width="1.2" height="1.5" fill="#777"/><rect x="96.85" y="5" width="1.3" height="7.5" fill="#444"/><rect x="107.65" y="8.8" width="1.2" height="1.5" fill="#777"/><rect x="118.40" y="8.8" width="1.2" height="1.5" fill="#777"/><rect x="129.15" y="8.8" width="1.2" height="1.5" fill="#777"/><rect x="150.65" y="8.8" width="1.2" height="1.5" fill="#777"/><rect x="161.40" y="8.8" width="1.2" height="1.5" fill="#777"/><rect x="172.15" y="8.8" width="1.2" height="1.5" fill="#777"/><rect x="182.85" y="5" width="1.3" height="7.5" fill="#444"/><rect x="193.65" y="8.8" width="1.2" height="1.5" fill="#777"/><rect x="204.40" y="8.8" width="1.2" height="1.5" fill="#777"/><rect x="215.15" y="8.8" width="1.2" height="1.5" fill="#777"/><rect x="236.65" y="8.8" width="1.2" height="1.5" fill="#777"/><rect x="247.40" y="8.8" width="1.2" height="1.5" fill="#777"/><rect x="258.15" y="8.8" width="1.2" height="1.5" fill="#777"/><rect x="268.85" y="5" width="1.3" height="7.5" fill="#444"/><rect x="279.65" y="8.8" width="1.2" height="1.5" fill="#777"/><rect x="290.40" y="8.8" width="1.2" height="1.5" fill="#777"/><rect x="301.15" y="8.8" width="1.2" height="1.5" fill="#777"/><rect x="322.65" y="8.8" width="1.2" height="1.5" fill="#777"/><rect x="333.40" y="8.8" width="1.2" height="1.5" fill="#777"/><rect x="344.15" y="8.8" width="1.2" height="1.5" fill="#777"/><rect x="354.85" y="5" width="1.3" height="7.5" fill="#444"/><rect x="365.65" y="8.8" width="1.2" height="1.5" fill="#777"/><rect x="376.40" y="8.8" width="1.2" height="1.5" fill="#777"/><rect x="387.15" y="8.8" width="1.2" height="1.5" fill="#777"/><rect x="408.65" y="8.8" width="1.2" height="1.5" fill="#777"/><rect x="419.40" y="8.8" width="1.2" height="1.5" fill="#777"/><rect x="430.15" y="8.8" width="1.2" height="1.5" fill="#777"/><rect x="440.85" y="5" width="1.3" height="7.5" fill="#444"/><rect x="451.65" y="8.8" width="1.2" height="1.5" fill="#777"/><rect x="462.40" y="8.8" width="1.2" height="1.5" fill="#777"/><rect x="473.15" y="8.8" width="1.2" height="1.5" fill="#777"/><rect x="494.65" y="8.8" width="1.2" height="1.5" fill="#777"/><rect x="505.40" y="8.8" width="1.2" height="1.5" fill="#777"/><rect x="516.15" y="8.8" width="1.2" height="1.5" fill="#777"/><rect x="526.85" y="5" width="1.3" height="7.5" fill="#444"/><rect x="537.65" y="8.8" width="1.2" height="1.5" fill="#777"/><rect x="548.40" y="8.8" width="1.2" height="1.5" fill="#777"/><rect x="559.15" y="8.8" width="1.2" height="1.5" fill="#777"/><rect x="580.65" y="8.8" width="1.2" height="1.5" fill="#777"/><rect x="591.40" y="8.8" width="1.2" height="1.5" fill="#777"/><rect x="602.15" y="8.8" width="1.2" height="1.5" fill="#777"/><rect x="612.85" y="5" width="1.3" height="7.5" fill="#444"/><rect x="623.65" y="8.8" width="1.2" height="1.5" fill="#777"/><rect x="634.40" y="8.8" width="1.2" height="1.5" fill="#777"/><rect x="645.15" y="8.8" width="1.2" height="1.5" fill="#777"/><rect x="666.65" y="8.8" width="1.2" height="1.5" fill="#777"/><rect x="677.40" y="8.8" width="1.2" height="1.5" fill="#777"/><rect x="688.15" y="8.8" width="1.2" height="1.5" fill="#777"/><rect x="698.85" y="5" width="1.3" height="7.5" fill="#444"/><rect x="709.65" y="8.8" width="1.2" height="1.5" fill="#777"/><rect x="720.40" y="8.8" width="1.2" height="1.5" fill="#777"/><rect x="731.15" y="8.8" width="1.2" height="1.5" fill="#777"/><rect x="752.65" y="8.8" width="1.2" height="1.5" fill="#777"/><rect x="763.40" y="8.8" width="1.2" height="1.5" fill="#777"/><rect x="774.15" y="8.8" width="1.2" height="1.5" fill="#777"/><rect x="784.85" y="5" width="1.3" height="7.5" fill="#444"/><rect x="795.65" y="8.8" width="1.2" height="1.5" fill="#777"/><rect x="806.40" y="8.8" width="1.2" height="1.5" fill="#777"/><rect x="817.15" y="8.8" width="1.2" height="1.5" fill="#777"/><rect x="838.65" y="8.8" width="1.2" height="1.5" fill="#777"/><rect x="849.40" y="8.8" width="1.2" height="1.5" fill="#777"/><rect x="860.15" y="8.8" width="1.2" height="1.5" fill="#777"/><rect x="870.85" y="5" width="1.3" height="7.5" fill="#444"/><rect x="881.65" y="8.8" width="1.2" height="1.5" fill="#777"/><rect x="892.40" y="8.8" width="1.2" height="1.5" fill="#777"/><rect x="903.15" y="8.8" width="1.2" height="1.5" fill="#777"/><rect x="924.65" y="8.8" width="1.2" height="1.5" fill="#777"/><rect x="935.40" y="8.8" width="1.2" height="1.5" fill="#777"/><rect x="946.15" y="8.8" width="1.2" height="1.5" fill="#777"/><rect x="956.85" y="5" width="1.3" height="7.5" fill="#444"/><rect x="967.65" y="8.8" width="1.2" height="1.5" fill="#777"/><rect x="978.40" y="8.8" width="1.2" height="1.5" fill="#777"/><rect x="989.15" y="8.8" width="1.2" height="1.5" fill="#777"/><rect x="1010.65" y="8.8" width="1.2" height="1.5" fill="#777"/><rect x="1021.40" y="8.8" width="1.2" height="1.5" fill="#777"/><rect x="1032.15" y="8.8" width="1.2" height="1.5" fill="#777"/><rect x="1042.85" y="5" width="1.3" height="7.5" fill="#444"/><rect x="1053.65" y="8.8" width="1.2" height="1.5" fill="#777"/><rect x="1064.40" y="8.8" width="1.2" height="1.5" fill="#777"/><rect x="1075.15" y="8.8" width="1.2" height="1.5" fill="#777"/><rect x="1096.65" y="8.8" width="1.2" height="1.5" fill="#777"/><rect x="1107.40" y="8.8" width="1.2" height="1.5" fill="#777"/><rect x="1118.15" y="8.8" width="1.2" height="1.5" fill="#777"/><rect x="1128.85" y="5" width="1.3" height="7.5" fill="#444"/><rect x="1139.65" y="8.8" width="1.2" height="1.5" fill="#777"/></svg>
<div style="position:absolute;left:643.10px;top:249.66px;font-family:'Liberation Sans',sans-serif;font-size:17.50px;letter-spacing:0.950px;font-weight:400;color:#3a3a3a;line-height:1;white-space:pre;-webkit-text-stroke:0.15px #3a3a3a;">6</div>
<div style="position:absolute;left:729.10px;top:249.57px;font-family:'Liberation Sans',sans-serif;font-size:17.50px;letter-spacing:0.600px;font-weight:400;color:#3a3a3a;line-height:1;white-space:pre;-webkit-text-stroke:0.15px #3a3a3a;">5</div>
<div style="position:absolute;left:815.19px;top:248.75px;font-family:'Liberation Sans',sans-serif;font-size:17.50px;letter-spacing:0.075px;font-weight:400;color:#3a3a3a;line-height:1;white-space:pre;-webkit-text-stroke:0.15px #3a3a3a;">4</div>
<div style="position:absolute;left:900.69px;top:249.66px;font-family:'Liberation Sans',sans-serif;font-size:17.50px;letter-spacing:0.775px;font-weight:400;color:#3a3a3a;line-height:1;white-space:pre;-webkit-text-stroke:0.15px #3a3a3a;">3</div>
<div style="position:absolute;left:987.10px;top:248.75px;font-family:'Liberation Sans',sans-serif;font-size:17.50px;letter-spacing:0.950px;font-weight:400;color:#3a3a3a;line-height:1;white-space:pre;-webkit-text-stroke:0.15px #3a3a3a;">2</div>
<div style="position:absolute;left:1072.84px;top:249.66px;font-family:'Liberation Sans',sans-serif;font-size:17.50px;letter-spacing:1.475px;font-weight:400;color:#3a3a3a;line-height:1;white-space:pre;-webkit-text-stroke:0.15px #3a3a3a;">1</div>
<div style="position:absolute;left:1159.10px;top:249.66px;font-family:'Liberation Sans',sans-serif;font-size:17.50px;letter-spacing:0.600px;font-weight:400;color:#3a3a3a;line-height:1;white-space:pre;-webkit-text-stroke:0.15px #3a3a3a;">0</div>
<div style="position:absolute;left:1244.84px;top:249.66px;font-family:'Liberation Sans',sans-serif;font-size:17.50px;letter-spacing:1.475px;font-weight:400;color:#3a3a3a;line-height:1;white-space:pre;-webkit-text-stroke:0.15px #3a3a3a;">1</div>
<div style="position:absolute;left:1331.10px;top:248.75px;font-family:'Liberation Sans',sans-serif;font-size:17.50px;letter-spacing:0.950px;font-weight:400;color:#3a3a3a;line-height:1;white-space:pre;-webkit-text-stroke:0.15px #3a3a3a;">2</div>
<div style="position:absolute;left:1416.69px;top:249.66px;font-family:'Liberation Sans',sans-serif;font-size:17.50px;letter-spacing:0.775px;font-weight:400;color:#3a3a3a;line-height:1;white-space:pre;-webkit-text-stroke:0.15px #3a3a3a;">3</div>
<div style="position:absolute;left:1503.19px;top:248.75px;font-family:'Liberation Sans',sans-serif;font-size:17.50px;letter-spacing:0.075px;font-weight:400;color:#3a3a3a;line-height:1;white-space:pre;-webkit-text-stroke:0.15px #3a3a3a;">4</div>
<div style="position:absolute;left:1589.10px;top:249.57px;font-family:'Liberation Sans',sans-serif;font-size:17.50px;letter-spacing:0.600px;font-weight:400;color:#3a3a3a;line-height:1;white-space:pre;-webkit-text-stroke:0.15px #3a3a3a;">5</div>
<div style="position:absolute;left:1675.10px;top:249.66px;font-family:'Liberation Sans',sans-serif;font-size:17.50px;letter-spacing:0.950px;font-weight:400;color:#3a3a3a;line-height:1;white-space:pre;-webkit-text-stroke:0.15px #3a3a3a;">6</div>
<div style="position:absolute;left:317px;top:301px;width:20.5px;height:643px;background:#fff;"></div>
<svg style="position:absolute;left:317px;top:301px;" width="21" height="643" viewBox="0 0 21 643"><rect x="8.8" y="8.65" width="1.5" height="1.2" fill="#777"/><rect x="5" y="19.35" width="7.5" height="1.3" fill="#444"/><rect x="8.8" y="30.15" width="1.5" height="1.2" fill="#777"/><rect x="8.8" y="40.90" width="1.5" height="1.2" fill="#777"/><rect x="8.8" y="51.65" width="1.5" height="1.2" fill="#777"/><rect x="8.8" y="73.15" width="1.5" height="1.2" fill="#777"/><rect x="8.8" y="83.90" width="1.5" height="1.2" fill="#777"/><rect x="8.8" y="94.65" width="1.5" height="1.2" fill="#777"/><rect x="5" y="105.35" width="7.5" height="1.3" fill="#444"/><rect x="8.8" y="116.15" width="1.5" height="1.2" fill="#777"/><rect x="8.8" y="126.90" width="1.5" height="1.2" fill="#777"/><rect x="8.8" y="137.65" width="1.5" height="1.2" fill="#777"/><rect x="8.8" y="159.15" width="1.5" height="1.2" fill="#777"/><rect x="8.8" y="169.90" width="1.5" height="1.2" fill="#777"/><rect x="8.8" y="180.65" width="1.5" height="1.2" fill="#777"/><rect x="5" y="191.35" width="7.5" height="1.3" fill="#444"/><rect x="8.8" y="202.15" width="1.5" height="1.2" fill="#777"/><rect x="8.8" y="212.90" width="1.5" height="1.2" fill="#777"/><rect x="8.8" y="223.65" width="1.5" height="1.2" fill="#777"/><rect x="8.8" y="245.15" width="1.5" height="1.2" fill="#777"/><rect x="8.8" y="255.90" width="1.5" height="1.2" fill="#777"/><rect x="8.8" y="266.65" width="1.5" height="1.2" fill="#777"/><rect x="5" y="277.35" width="7.5" height="1.3" fill="#444"/><rect x="8.8" y="288.15" width="1.5" height="1.2" fill="#777"/><rect x="8.8" y="298.90" width="1.5" height="1.2" fill="#777"/><rect x="8.8" y="309.65" width="1.5" height="1.2" fill="#777"/><rect x="8.8" y="331.15" width="1.5" height="1.2" fill="#777"/><rect x="8.8" y="341.90" width="1.5" height="1.2" fill="#777"/><rect x="8.8" y="352.65" width="1.5" height="1.2" fill="#777"/><rect x="5" y="363.35" width="7.5" height="1.3" fill="#444"/><rect x="8.8" y="374.15" width="1.5" height="1.2" fill="#777"/><rect x="8.8" y="384.90" width="1.5" height="1.2" fill="#777"/><rect x="8.8" y="395.65" width="1.5" height="1.2" fill="#777"/><rect x="8.8" y="417.15" width="1.5" height="1.2" fill="#777"/><rect x="8.8" y="427.90" width="1.5" height="1.2" fill="#777"/><rect x="8.8" y="438.65" width="1.5" height="1.2" fill="#777"/><rect x="5" y="449.35" width="7.5" height="1.3" fill="#444"/><rect x="8.8" y="460.15" width="1.5" height="1.2" fill="#777"/><rect x="8.8" y="470.90" width="1.5" height="1.2" fill="#777"/><rect x="8.8" y="481.65" width="1.5" height="1.2" fill="#777"/><rect x="8.8" y="503.15" width="1.5" height="1.2" fill="#777"/><rect x="8.8" y="513.90" width="1.5" height="1.2" fill="#777"/><rect x="8.8" y="524.65" width="1.5" height="1.2" fill="#777"/><rect x="5" y="535.35" width="7.5" height="1.3" fill="#444"/><rect x="8.8" y="546.15" width="1.5" height="1.2" fill="#777"/><rect x="8.8" y="556.90" width="1.5" height="1.2" fill="#777"/><rect x="8.8" y="567.65" width="1.5" height="1.2" fill="#777"/><rect x="8.8" y="589.15" width="1.5" height="1.2" fill="#777"/><rect x="8.8" y="599.90" width="1.5" height="1.2" fill="#777"/><rect x="8.8" y="610.65" width="1.5" height="1.2" fill="#777"/><rect x="5" y="621.35" width="7.5" height="1.3" fill="#444"/><rect x="8.8" y="632.15" width="1.5" height="1.2" fill="#777"/></svg>
<div style="position:absolute;left:317.3px;top:354px;width:20px;height:20px;display:flex;align-items:center;justify-content:center;transform:rotate(-90deg);font-family:'Liberation Sans';font-size:17.5px;color:#3a3a3a;line-height:1;-webkit-text-stroke:0.15px #3a3a3a">3</div>
<div style="position:absolute;left:317.3px;top:440px;width:20px;height:20px;display:flex;align-items:center;justify-content:center;transform:rotate(-90deg);font-family:'Liberation Sans';font-size:17.5px;color:#3a3a3a;line-height:1;-webkit-text-stroke:0.15px #3a3a3a">2</div>
<div style="position:absolute;left:317.3px;top:526px;width:20px;height:20px;display:flex;align-items:center;justify-content:center;transform:rotate(-90deg);font-family:'Liberation Sans';font-size:17.5px;color:#3a3a3a;line-height:1;-webkit-text-stroke:0.15px #3a3a3a">1</div>
<div style="position:absolute;left:317.3px;top:612px;width:20px;height:20px;display:flex;align-items:center;justify-content:center;transform:rotate(-90deg);font-family:'Liberation Sans';font-size:17.5px;color:#3a3a3a;line-height:1;-webkit-text-stroke:0.15px #3a3a3a">0</div>
<div style="position:absolute;left:317.3px;top:698px;width:20px;height:20px;display:flex;align-items:center;justify-content:center;transform:rotate(-90deg);font-family:'Liberation Sans';font-size:17.5px;color:#3a3a3a;line-height:1;-webkit-text-stroke:0.15px #3a3a3a">1</div>
<div style="position:absolute;left:317.3px;top:784px;width:20px;height:20px;display:flex;align-items:center;justify-content:center;transform:rotate(-90deg);font-family:'Liberation Sans';font-size:17.5px;color:#3a3a3a;line-height:1;-webkit-text-stroke:0.15px #3a3a3a">2</div>
<div style="position:absolute;left:317.3px;top:870px;width:20px;height:20px;display:flex;align-items:center;justify-content:center;transform:rotate(-90deg);font-family:'Liberation Sans';font-size:17.5px;color:#3a3a3a;line-height:1;-webkit-text-stroke:0.15px #3a3a3a">3</div>
<div style="position:absolute;left:590.5px;top:300.5px;width:1146px;height:645.5px;background:#fff;box-shadow:0 0 0 1px #c6c6c6, 2px 2px 3px rgba(0,0,0,0.08);"></div>
<div style="position:absolute;left:1290.91px;top:553.64px;font-family:'Liberation Sans',sans-serif;font-size:64.00px;letter-spacing:2.384px;font-weight:400;color:#0c0c0c;line-height:1;white-space:pre;">tation</div>
<div style="position:absolute;left:1291.02px;top:645.20px;font-family:'Liberation Sans',sans-serif;font-size:25.50px;letter-spacing:-0.173px;font-weight:400;color:#0c0c0c;line-height:1;white-space:pre;-webkit-text-stroke:0.1px #0c0c0c;">Scratch</div>
<div style="position:absolute;left:1977.6px;top:243px;width:22px;height:637px;background:#dadada;"></div>
<div style="position:absolute;left:1977.6px;top:243px;width:22px;height:107px;background:#fff;box-shadow:inset 0 0 0 1.3px #a9a9a9;"></div>
<div style="position:absolute;left:1977.6px;top:265px;width:22px;height:1.5px;background:#a9a9a9;"></div>
<div style="position:absolute;left:1977.6px;top:857.4px;width:22px;height:22.2px;background:#fff;box-shadow:inset 0 0 0 1px #c8c8c8;"></div>
<svg style="position:absolute;left:1977.6px;top:243px;" width="22" height="700" viewBox="0 0 22 700">
<path d="M6 15.5 L16 15.5 L11 10.5 Z" fill="#666"/>
<path d="M6 624 L16 624 L11 629 Z" fill="#666"/>
<path d="M6 651 L16 651 L11 645.5 Z M6 657.5 L16 657.5 L11 652 Z" fill="#666"/>
<path d="M6 673 L16 673 L11 678.5 Z M6 679.5 L16 679.5 L11 685 Z" fill="#666"/>
</svg>
<svg style="position:absolute;left:1205px;top:1093px;" width="800" height="30" viewBox="0 0 800 30">
<g transform="translate(-1205,-1093)">
 <path d="M1216 1104 L1221 1099.5 L1226 1104 Z" fill="#555"/>
 <rect x="1212.5" y="1106" width="18" height="1.5" fill="#666"/>
 <rect x="1212.5" y="1110" width="18" height="1.5" fill="#666"/>
 <rect x="1212.5" y="1114" width="18" height="1.5" fill="#666"/>
 <rect x="1214" y="1117.5" width="9" height="1.5" fill="#666"/>
 <path d="M1317.5 1099 H1336 V1112 H1327 L1322.5 1117.5 V1112 H1317.5 Z" fill="#666"/>
 <rect x="1456.5" y="1092.5" width="59" height="30.5" fill="#c8c8c8"/>
 <rect x="1476" y="1098" width="20.5" height="18.5" fill="none" stroke="#555" stroke-width="1.5"/>
 <path d="M1479.5 1098 V1116.5 M1479.5 1112 H1496.5" stroke="#555" stroke-width="1.3"/>
 <rect x="1483" y="1101.5" width="9" height="4.5" fill="none" stroke="#555" stroke-width="1.3"/>
 <g fill="none" stroke="#555" stroke-width="1.5">
  <rect x="1535" y="1098" width="8" height="6"/><rect x="1547.5" y="1098" width="8" height="6"/>
  <rect x="1535" y="1110" width="8" height="6"/><rect x="1547.5" y="1110" width="8" height="6"/>
  <path d="M1595 1099 Q1600 1097 1604 1100 Q1608 1097 1613 1099 V1116 Q1608 1114 1604 1117 Q1600 1114 1595 1116 Z"/>
  <path d="M1604 1100 V1117" />
  <path d="M1597.5 1103 H1601.5 M1597.5 1106.5 H1601.5 M1597.5 1110 H1601.5 M1606.5 1103 H1610.5 M1606.5 1106.5 H1610.5 M1606.5 1110 H1610.5" stroke-width="1"/>
  <path d="M1654 1099.5 H1673 M1656 1101 V1109.5 H1671 V1101 M1663.5 1109.5 V1116 M1659 1116.5 H1668 M1659.5 1104.5 H1668"/>
 </g>
 <rect x="1701.5" y="1106.8" width="10" height="2" fill="#555"/>
 <rect x="1718" y="1106.6" width="155.5" height="1" fill="#999"/>
 <rect x="1795.5" y="1104" width="1" height="7" fill="#999"/>
 <rect x="1758" y="1099" width="6.6" height="17" fill="#555"/>
 <rect x="1879.8" y="1107" width="13" height="2.2" fill="#555"/>
 <rect x="1885.2" y="1101.8" width="2.2" height="12.6" fill="#555"/>
 <rect x="1971.5" y="1099.5" width="18.5" height="19" fill="none" stroke="#555" stroke-width="1.5"/>
 <path d="M1980.7 1102 V1116 M1974 1109 H1988" stroke="#777" stroke-width="0.9"/>
 <path d="M1978.7 1104 L1980.7 1101.8 L1982.7 1104 Z M1978.7 1114 L1980.7 1116.2 L1982.7 1114 Z M1976 1107 L1973.8 1109 L1976 1111 Z M1985.4 1107 L1987.6 1109 L1985.4 1111 Z" fill="#555"/>
</g></svg>
<div style="position:absolute;left:712.5px;top:377.5px;width:579.5px;height:363.5px;box-shadow:inset 0 0 0 1px #fafafa, 0 0 0 1px #c4c4c4, 0 2px 14px rgba(0,0,0,0.30);background:#efefef"></div>
<div style="position:absolute;left:713px;top:378px;width:578.5px;height:49.3px;background:#fff;"></div>
<div style="position:absolute;left:727.16px;top:395.78px;font-family:'Liberation Sans',sans-serif;font-size:17.80px;letter-spacing:-0.448px;font-weight:400;color:#111;line-height:1;white-space:pre;-webkit-text-stroke:0.3px #111;">Slide Size</div>
<div style="position:absolute;left:1176.30px;top:392.23px;font-family:'Liberation Sans',sans-serif;font-size:22.14px;letter-spacing:-2.829px;font-weight:400;color:#111;line-height:1;white-space:pre;-webkit-text-stroke:0.3px #111;">?</div>
<svg style="position:absolute;left:1240px;top:390px;" width="26" height="26" viewBox="0 0 26 26"><path d="M5.4 4.4 L21.4 20.4 M21.4 4.4 L5.4 20.4" stroke="#222" stroke-width="1.6"/></svg>
<div style="position:absolute;left:725.41px;top:441.78px;font-family:'Liberation Sans',sans-serif;font-size:17.80px;letter-spacing:-0.061px;font-weight:400;color:#111;line-height:1;white-space:pre;-webkit-text-stroke:0.3px #111;">Slides sized for:</div>
<div style="position:absolute;left:725.6px;top:457px;width:8.5px;height:1.2px;background:#111;"></div>
<div style="position:absolute;left:724.2px;top:464.1px;width:261.4px;height:25.9px;background:#fff;box-shadow:inset 0 0 0 1.3px #adadad;"></div>
<div style="position:absolute;left:727px;top:466.2px;width:226.4px;height:19.6px;background:#3399ff;"></div>
<div style="position:absolute;left:729.30px;top:469.78px;font-family:'Liberation Sans',sans-serif;font-size:17.80px;letter-spacing:-0.015px;font-weight:400;color:#fff;line-height:1;white-space:pre;-webkit-text-stroke:0.3px #fff;">Widescreen</div>
<div style="position:absolute;left:955.5px;top:465.5px;width:28.7px;height:23px;background:#dcdcdc;box-shadow:inset -1px -1px 0 #b8b8b8;"></div>
<svg style="position:absolute;left:955.5px;top:465.5px;" width="29" height="23" viewBox="0 0 29 23"><path d="M7 10.5 L13.8 17.7 L20.5 10.5" fill="none" stroke="#444" stroke-width="1.6"/></svg>
<div style="position:absolute;left:725.90px;top:499.98px;font-family:'Liberation Sans',sans-serif;font-size:17.80px;letter-spacing:0.606px;font-weight:400;color:#111;line-height:1;white-space:pre;-webkit-text-stroke:0.3px #111;">Width:</div>
<div style="position:absolute;left:725.6px;top:514.8px;width:16.8px;height:1.2px;background:#111;"></div>
<div style="position:absolute;left:724.2px;top:521px;width:110.39999999999998px;height:30.399999999999977px;background:#fff;box-shadow:inset 0 0 0 1.3px #adadad;"></div>
<div style="position:absolute;left:808px;top:523.5px;width:23.800000000000068px;height:25.399999999999977px;background:#e6e6e6;box-shadow:inset 0 0 0 1px #c9c9c9;"></div>
<div style="position:absolute;left:808px;top:535.6px;width:23.800000000000068px;height:1.2px;background:#c0c0c0;"></div>
<svg style="position:absolute;left:808px;top:521px;" width="26.600000000000023" height="30.399999999999977" viewBox="0 0 26.600000000000023 30.399999999999977"><path d="M7.6 11.4 L16.2 11.4 L11.9 6.6 Z M7.6 18.3 L16.2 18.3 L11.9 23.1 Z" fill="#111"/></svg>
<div style="position:absolute;left:728.43px;top:528.18px;font-family:'Liberation Sans',sans-serif;font-size:17.80px;letter-spacing:-0.158px;font-weight:400;color:#111;line-height:1;white-space:pre;-webkit-text-stroke:0.3px #111;">13.333 in</div>
<div style="position:absolute;left:725.13px;top:559.20px;font-family:'Liberation Sans',sans-serif;font-size:17.80px;letter-spacing:0.567px;font-weight:400;color:#111;line-height:1;white-space:pre;-webkit-text-stroke:0.3px #111;">Height:</div>
<div style="position:absolute;left:725.7px;top:575.8px;width:12px;height:1.2px;background:#111;"></div>
<div style="position:absolute;left:724.3px;top:582.5px;width:110.10000000000002px;height:30.0px;background:#fff;box-shadow:inset 0 0 0 1.3px #adadad;"></div>
<div style="position:absolute;left:808px;top:585.0px;width:23.600000000000023px;height:25.0px;background:#e6e6e6;box-shadow:inset 0 0 0 1px #c9c9c9;"></div>
<div style="position:absolute;left:808px;top:596.9px;width:23.600000000000023px;height:1.2px;background:#c0c0c0;"></div>
<svg style="position:absolute;left:808px;top:582.5px;" width="26.399999999999977" height="30.0" viewBox="0 0 26.399999999999977 30.0"><path d="M7.5 11.2 L16.1 11.2 L11.8 6.4 Z M7.5 18.1 L16.1 18.1 L11.8 22.9 Z" fill="#111"/></svg>
<div style="position:absolute;left:727.91px;top:589.78px;font-family:'Liberation Sans',sans-serif;font-size:17.80px;letter-spacing:0.305px;font-weight:400;color:#111;line-height:1;white-space:pre;-webkit-text-stroke:0.3px #111;">7.5 in</div>
<div style="position:absolute;left:724.88px;top:621.78px;font-family:'Liberation Sans',sans-serif;font-size:17.80px;letter-spacing:0.084px;font-weight:400;color:#111;line-height:1;white-space:pre;-webkit-text-stroke:0.3px #111;">Number slides from:</div>
<div style="position:absolute;left:725.7px;top:636.5px;width:12px;height:1.2px;background:#111;"></div>
<div style="position:absolute;left:724.3px;top:643px;width:91.40000000000009px;height:30.399999999999977px;background:#fff;box-shadow:inset 0 0 0 1.3px #adadad;"></div>
<div style="position:absolute;left:789.5px;top:645.5px;width:23.40000000000009px;height:25.399999999999977px;background:#e6e6e6;box-shadow:inset 0 0 0 1px #c9c9c9;"></div>
<div style="position:absolute;left:789.5px;top:657.6px;width:23.40000000000009px;height:1.2px;background:#c0c0c0;"></div>
<svg style="position:absolute;left:789.5px;top:643px;" width="26.200000000000045" height="30.399999999999977" viewBox="0 0 26.200000000000045 30.399999999999977"><path d="M7.4 11.4 L16.0 11.4 L11.7 6.6 Z M7.4 18.3 L16.0 18.3 L11.7 23.1 Z" fill="#111"/></svg>
<div style="position:absolute;left:727.70px;top:650.42px;font-family:'Liberation Sans',sans-serif;font-size:17.97px;letter-spacing:-2.828px;font-weight:400;color:#111;line-height:1;white-space:pre;-webkit-text-stroke:0.3px #111;">1</div>
<div style="position:absolute;left:1000.5px;top:448px;width:279.5px;height:238px;box-shadow:inset 0 0 0 1px #d5d5d5, 1px 1px 0 #fff inset"></div>
<div style="position:absolute;left:1010px;top:447px;width:102px;height:3px;background:#f0f0f0;"></div>
<div style="position:absolute;left:1015.16px;top:441.78px;font-family:'Liberation Sans',sans-serif;font-size:17.80px;letter-spacing:0.652px;font-weight:400;color:#111;line-height:1;white-space:pre;-webkit-text-stroke:0.3px #111;">Orientation</div>
<div style="position:absolute;left:1020px;top:478.3px;width:241px;height:88.69999999999999px;box-shadow:inset 0 0 0 1px #d5d5d5, 1px 1px 0 #fff inset"></div>
<div style="position:absolute;left:1029px;top:477.3px;width:54px;height:3px;background:#f0f0f0;"></div>
<div style="position:absolute;left:1032.41px;top:470.78px;font-family:'Liberation Sans',sans-serif;font-size:17.80px;letter-spacing:-0.278px;font-weight:400;color:#111;line-height:1;white-space:pre;-webkit-text-stroke:0.3px #111;">Slides</div>
<div style="position:absolute;left:1020px;top:585px;width:241px;height:87.29999999999995px;box-shadow:inset 0 0 0 1px #d5d5d5, 1px 1px 0 #fff inset"></div>
<div style="position:absolute;left:1029px;top:584px;width:228px;height:3px;background:#f0f0f0;"></div>
<div style="position:absolute;left:1032.88px;top:577.01px;font-family:'Liberation Sans',sans-serif;font-size:17.80px;letter-spacing:0.477px;font-weight:400;color:#111;line-height:1;white-space:pre;-webkit-text-stroke:0.3px #111;">Notes, Handouts &amp; Outline</div>
<svg style="position:absolute;left:1038px;top:502px;" width="50" height="40" viewBox="0 0 50 40">
<g transform="translate(-1038,-502)">
<path d="M1042 506.2 H1073.2 L1083.7 517.2 V536.9 H1042 Z" fill="#fff" stroke="#808080" stroke-width="1.6"/>
<path d="M1073.2 506.2 V517 H1083.7" fill="none" stroke="#808080" stroke-width="1.5"/>
<g stroke="#aaa" stroke-width="1.3"><path d="M1046 512.3 H1069 M1046 516.9 H1069 M1046 521.6 H1080 M1046 526.3 H1080 M1046 531 H1080"/></g>
</g></svg>
<svg style="position:absolute;left:1042px;top:603px;" width="40" height="52" viewBox="0 0 40 52">
<g transform="translate(-1042,-603)">
<path d="M1046.3 607.8 H1066.5 L1077.4 618.8 V650 H1046.3 Z" fill="#fff" stroke="#808080" stroke-width="1.6"/>
<path d="M1066.5 607.8 V618.6 H1077.4" fill="none" stroke="#808080" stroke-width="1.5"/>
<g stroke="#aaa" stroke-width="1.3"><path d="M1050 613.5 H1063 M1050 618 H1063 M1050 623 H1073.5 M1050 628 H1073.5 M1050 633 H1073.5 M1050 638 H1073.5 M1050 643 H1073.5"/></g>
</g></svg>
<svg style="position:absolute;left:1100px;top:501.79999999999995px;" width="24" height="24" viewBox="0 0 24 24"><circle cx="12" cy="12" r="9.2" fill="#fff" stroke="#333" stroke-width="1.7"/></svg>
<svg style="position:absolute;left:1100px;top:531.4px;" width="24" height="24" viewBox="0 0 24 24"><circle cx="12" cy="12" r="9.2" fill="#fff" stroke="#333" stroke-width="1.7"/><circle cx="12" cy="12" r="5" fill="#222"/></svg>
<svg style="position:absolute;left:1100px;top:608px;" width="24" height="24" viewBox="0 0 24 24"><circle cx="12" cy="12" r="9.2" fill="#fff" stroke="#333" stroke-width="1.7"/><circle cx="12" cy="12" r="5" fill="#222"/></svg>
<svg style="position:absolute;left:1100px;top:637.7px;" width="24" height="24" viewBox="0 0 24 24"><circle cx="12" cy="12" r="9.2" fill="#fff" stroke="#333" stroke-width="1.7"/></svg>
<div style="position:absolute;left:1132.58px;top:507.98px;font-family:'Liberation Sans',sans-serif;font-size:17.80px;letter-spacing:0.244px;font-weight:400;color:#111;line-height:1;white-space:pre;-webkit-text-stroke:0.3px #111;">Portrait</div>
<div style="position:absolute;left:1133.3px;top:523.6px;width:8.5px;height:1.2px;background:#111;"></div>
<div style="position:absolute;left:1132.43px;top:535.40px;font-family:'Liberation Sans',sans-serif;font-size:17.80px;letter-spacing:-0.338px;font-weight:400;color:#111;line-height:1;white-space:pre;-webkit-text-stroke:0.3px #111;">Landscape</div>
<div style="position:absolute;left:1133.3px;top:552.8px;width:8px;height:1.2px;background:#111;"></div>
<div style="position:absolute;left:1132.58px;top:614.38px;font-family:'Liberation Sans',sans-serif;font-size:17.80px;letter-spacing:0.301px;font-weight:400;color:#111;line-height:1;white-space:pre;-webkit-text-stroke:0.3px #111;">Portrait</div>
<div style="position:absolute;left:1143px;top:629.6px;width:9.5px;height:1.2px;background:#111;"></div>
<div style="position:absolute;left:1132.63px;top:642.00px;font-family:'Liberation Sans',sans-serif;font-size:17.80px;letter-spacing:-0.263px;font-weight:400;color:#111;line-height:1;white-space:pre;-webkit-text-stroke:0.3px #111;">Landscape</div>
<div style="position:absolute;left:1141.5px;top:658.5px;width:9px;height:1.2px;background:#111;"></div>
<div style="position:absolute;left:1033.5px;top:694.6px;width:113.5px;height:32px;background:#e1e1e1;box-shadow:inset 0 0 0 2px #0078d7;"></div>
<div style="position:absolute;left:1077.93px;top:703.91px;font-family:'Liberation Sans',sans-serif;font-size:17.80px;letter-spacing:-0.600px;font-weight:400;color:#111;line-height:1;white-space:pre;-webkit-text-stroke:0.3px #111;">OK</div>
<div style="position:absolute;left:1164.8px;top:694.6px;width:113.6px;height:32px;background:#e1e1e1;box-shadow:inset 0 0 0 1px #adadad;"></div>
<div style="position:absolute;left:1195.01px;top:704.18px;font-family:'Liberation Sans',sans-serif;font-size:17.80px;letter-spacing:-0.640px;font-weight:400;color:#111;line-height:1;white-space:pre;-webkit-text-stroke:0.3px #111;">Cancel</div>
<svg style="position:absolute;left:836px;top:606px;z-index:5;" width="26" height="40" viewBox="0 0 26 40"><path d="M4 5 L4 31.5 L10.3 25.5 L15 35.5 L19.5 33.5 L14.8 23.7 L23.2 23.5 Z" fill="#fff" stroke="#111" stroke-width="1.6" stroke-linejoin="round"/></svg>
</body></html>
